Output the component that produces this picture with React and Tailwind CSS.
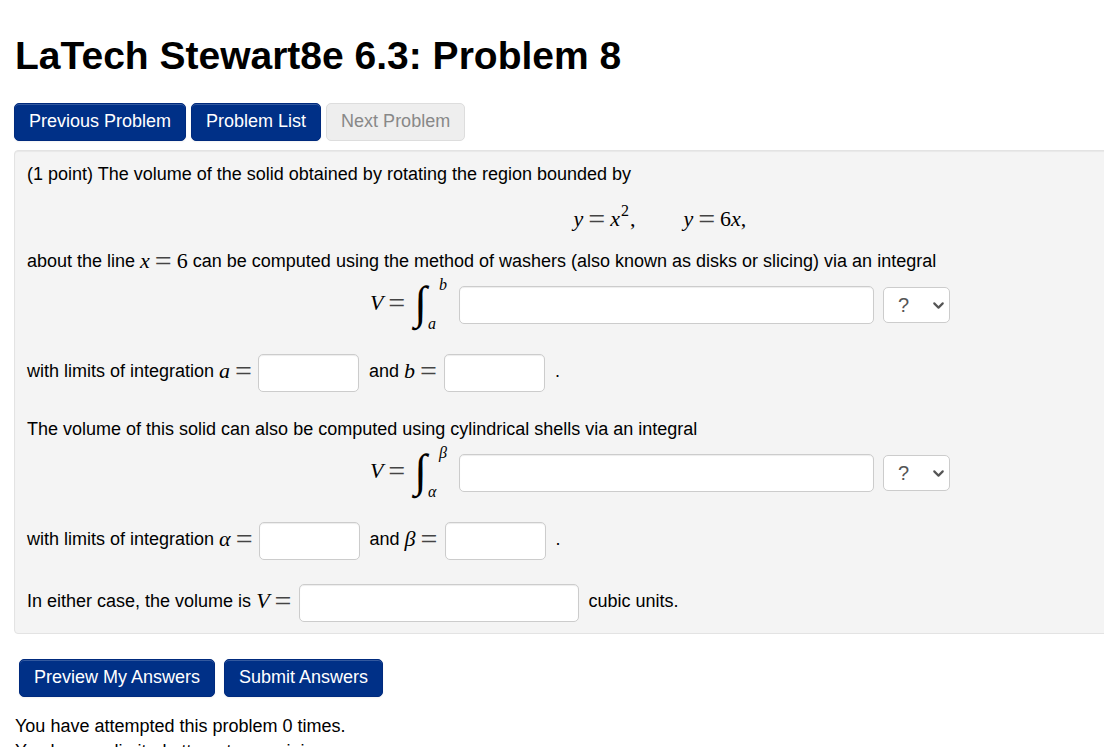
import React, { useState } from 'react';
import { ChevronDown } from 'lucide-react';

const fieldClasses =
  'h-[38px] rounded-[5px] border border-[#ccc] bg-white px-2 text-lg text-[#555] shadow-[inset_0_1px_1px_rgba(0,0,0,0.075)] outline-none';
const primaryClasses =
  'h-[38px] rounded-[5px] border border-[#002a7d] bg-[#003087] px-[14px] pb-[2px] text-white shadow-[inset_0_1px_0_rgba(255,255,255,0.2),0_1px_2px_rgba(0,0,0,0.05)]';

const V = ({ children }) => (
  <i className="font-['Liberation_Serif',serif] text-[22px]">{children}</i>
);

const Equals = () => (
  <span className="px-[5px] font-['Liberation_Serif',serif] text-[30px] text-[#444]">=</span>
);

const AnswerBox = ({ label, className }) => (
  <input type="text" aria-label={label} autoComplete="off" className={`${fieldClasses} ${className}`} />
);

const Integral = ({ lower, upper }) => (
  <div className="flex h-14 items-center pl-1 font-['Liberation_Serif',serif] italic">
    <span className="pb-1 text-[46px] leading-[48px]">∫</span>
    <div className="flex h-14 w-6 flex-col justify-between pb-px text-base leading-4">
      <span className="pl-3">{upper}</span>
      <span className="pl-px">{lower}</span>
    </div>
  </div>
);

const IntegralRow = ({ lower, upper, method }) => {
  const [variable, setVariable] = useState('?');
  return (
    <div className="flex h-[66px] items-center justify-center">
      <div className="flex items-center pb-1 leading-5">
        <V>V</V>
        <Equals />
      </div>
      <Integral lower={lower} upper={upper} />
      <AnswerBox label={`Integrand, ${method}`} className="ml-2 w-[415px]" />
      <div className="relative ml-[9px]">
        <select
          aria-label={`Variable of integration, ${method}`}
          value={variable}
          onChange={(e) => setVariable(e.target.value)}
          className="block h-9 w-[67px] appearance-none rounded-[5px] border border-[#ccc] bg-white px-[14px] text-xl text-[#555] outline-none"
        >
          <option value="?">?</option>
          <option value="dx">dx</option>
          <option value="dy">dy</option>
        </select>
        <ChevronDown size={17} strokeWidth={3} className="pointer-events-none absolute top-[10px] right-[3px] text-[#555]" />
      </div>
    </div>
  );
};

const LimitsRow = ({ lower, upper }) => (
  <div className="flex h-[70px] items-center">
    <div className="flex items-center pb-1 leading-5">
      with limits of integration&nbsp;<V>{lower}</V>
      <Equals />
    </div>
    <AnswerBox label={`Limit ${lower}`} className="ml-px w-[101px]" />
    <div className="ml-[10px] flex items-center pb-1 leading-5">
      and&nbsp;<V>{upper}</V>
      <Equals />
    </div>
    <AnswerBox label={`Limit ${upper}`} className="ml-[2px] w-[101px]" />
    <span className="ml-[10px] pb-1">.</span>
  </div>
);

const App = () => {
  return (
    <div className="h-screen overflow-hidden bg-white font-['Liberation_Sans',Arial,sans-serif] text-lg leading-5 text-black">
      <main className="w-[120%] pl-[14px] whitespace-nowrap">
        <h1 className="pt-9 pl-px text-[39px] leading-10 font-bold">LaTech Stewart8e 6.3: Problem 8</h1>

        <nav className="mt-[27px] flex gap-[5px]">
          <button type="button" className={primaryClasses}>Previous Problem</button>
          <button type="button" className={primaryClasses}>Problem List</button>
          <button
            type="button"
            disabled
            className="h-[38px] rounded-[5px] border border-[#ddd] bg-[#eee] px-[14px] pb-[2px] text-[#888]"
          >
            Next Problem
          </button>
        </nav>

        <form onSubmit={(e) => e.preventDefault()}>
          <section className="mt-[9px] mr-[19px] rounded-[4px] border border-[#e3e3e3] bg-[#f4f4f4] px-3 pt-[13px] pb-[3px] shadow-[inset_0_1px_1px_rgba(0,0,0,0.05)]">
            <p>(1 point) The volume of the solid obtained by rotating the region bounded by</p>

            <div className="flex h-[66px] items-center justify-center gap-12 pt-1">
              <div className="flex items-center leading-6">
                <V>y</V>
                <Equals />
                <V>x</V>
                <sup className="px-px font-['Liberation_Serif',serif] text-base">2</sup>
                <span className="font-['Liberation_Serif',serif] text-[22px]">,</span>
              </div>
              <div className="flex items-center leading-6">
                <V>y</V>
                <Equals />
                <span className="font-['Liberation_Serif',serif] text-[22px]">6</span>
                <V>x</V>
                <span className="font-['Liberation_Serif',serif] text-[22px]">,</span>
              </div>
            </div>

            <div className="flex h-[22px] items-center">
              about the line&nbsp;<V>x</V>
              <Equals />
              <span className="font-['Liberation_Serif',serif] text-[22px]">6</span>
              &nbsp;can be computed using the method of washers (also known as disks or slicing) via an integral
            </div>
            <IntegralRow lower="a" upper="b" method="washers" />
            <LimitsRow lower="a" upper="b" />

            <p className="mt-[10px] h-[22px] leading-[22px]">
              The volume of this solid can also be computed using cylindrical shells via an integral
            </p>
            <IntegralRow lower="α" upper="β" method="shells" />
            <LimitsRow lower="α" upper="β" />

            <div className="flex h-[54px] items-center">
              <div className="flex items-center pb-1 leading-5">
                In either case, the volume is&nbsp;<V>V</V>
                <Equals />
              </div>
              <AnswerBox label="Volume in cubic units" className="ml-[2px] w-[280px]" />
              <span className="ml-[10px] pb-1">cubic units.</span>
            </div>
          </section>

          <div className="mt-[25px] flex gap-[9px] pl-[5px]">
            <button type="button" className={primaryClasses}>Preview My Answers</button>
            <button type="submit" className={primaryClasses}>Submit Answers</button>
          </div>
        </form>

        <div className="mt-[17px] pl-px leading-[25px]">
          <p>You have attempted this problem 0 times.</p>
          <p>You have unlimited attempts remaining.</p>
        </div>
      </main>
    </div>
  );
};

export default App;
